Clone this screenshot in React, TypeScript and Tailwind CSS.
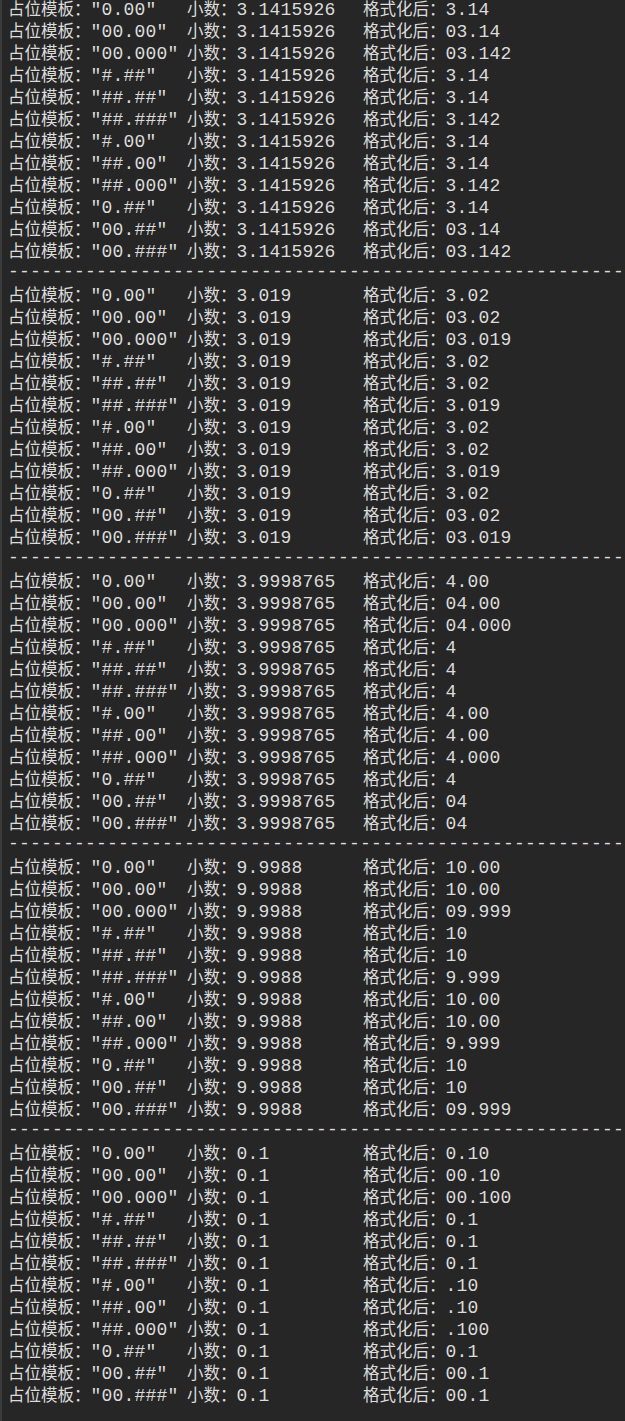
import React from 'react';

const TEMPLATES = ['0.00', '00.00', '00.000', '#.##', '##.##', '##.###', '#.00', '##.00', '##.000', '0.##', '00.##', '00.###'];

const BLOCKS: { num: string; results: string[] }[] = [
  { num: '3.1415926', results: ['3.14', '03.14', '03.142', '3.14', '3.14', '3.142', '3.14', '3.14', '3.142', '3.14', '03.14', '03.142'] },
  { num: '3.019', results: ['3.02', '03.02', '03.019', '3.02', '3.02', '3.019', '3.02', '3.02', '3.019', '3.02', '03.02', '03.019'] },
  { num: '3.9998765', results: ['4.00', '04.00', '04.000', '4', '4', '4', '4.00', '4.00', '4.000', '4', '04', '04'] },
  { num: '9.9988', results: ['10.00', '10.00', '09.999', '10', '10', '9.999', '10.00', '10.00', '9.999', '10', '10', '09.999'] },
  { num: '0.1', results: ['0.10', '00.10', '00.100', '0.1', '0.1', '0.1', '.10', '.10', '.100', '0.1', '00.1', '00.1'] },
];

const cjk = "font-['Noto_Sans_CJK_SC',sans-serif] text-[16.5px]";
const mono = "font-['Liberation_Mono',monospace] text-[18px] tracking-[0.2px]";

const Row: React.FC<{ tpl: string; num: string; res: string }> = ({ tpl, num, res }) => (
  <div className="flex items-baseline h-[22px] leading-[22px] whitespace-pre">
    <div className="w-[179px] shrink-0">
      <span className={cjk}>占位模板：</span>
      <span className={mono}>"{tpl}"</span>
    </div>
    <div className="w-[176px] shrink-0">
      <span className={cjk}>小数：</span>
      <span className={mono}>{num}</span>
    </div>
    <div>
      <span className={cjk}>格式化后：</span>
      <span className={mono}>{res}</span>
    </div>
  </div>
);

export default function App() {
  return (
    <div className="h-[1421px] overflow-hidden bg-[#262626] border-l-2 border-[#3b3b3b] text-[#dcdcdc]">
      <div className="-mt-[3px] pl-[6px]">
        {BLOCKS.map((block, b) => (
          <div key={b}>
            {TEMPLATES.map((tpl, i) => (
              <Row key={tpl} tpl={tpl} num={block.num} res={block.results[i]} />
            ))}
            {b < BLOCKS.length - 1 && (
              <div className={`h-[22px] leading-[22px] whitespace-pre ${mono}`}>{'-'.repeat(56)}</div>
            )}
          </div>
        ))}
      </div>
    </div>
  );
}
